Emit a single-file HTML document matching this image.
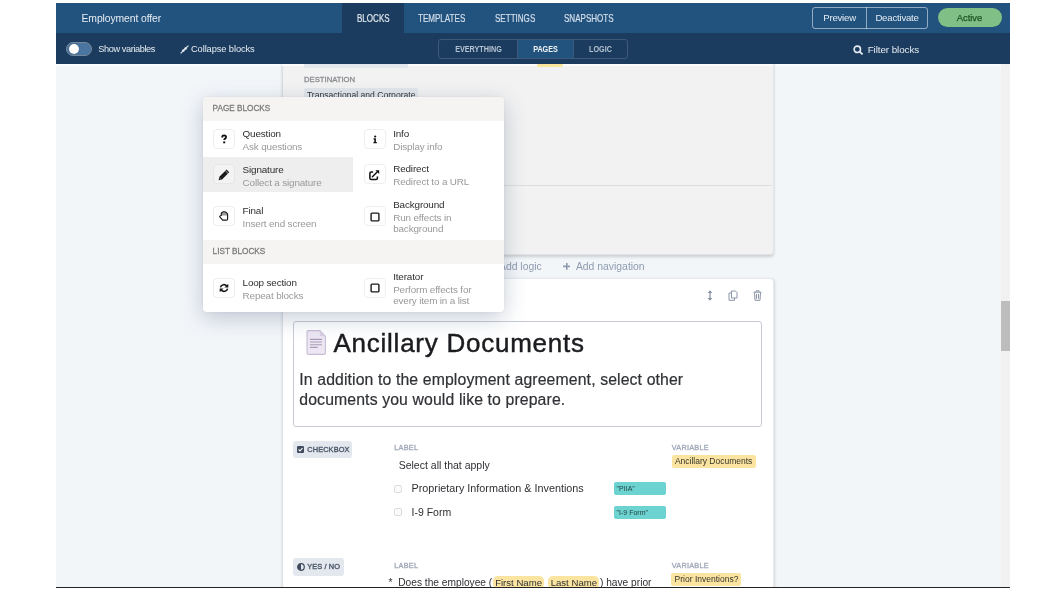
<!DOCTYPE html>
<html><head><meta charset="utf-8">
<style>
*{box-sizing:border-box;margin:0;padding:0}
html,body{width:1058px;height:596px;overflow:hidden;background:#fff;font-family:"Liberation Sans",sans-serif}
.a{position:absolute;white-space:nowrap}
#app{position:absolute;will-change:transform;left:56px;top:3px;width:954px;height:585px;background:#f3f6f9;overflow:hidden;border-bottom:1px solid #222}
#b1{position:absolute;z-index:10;left:0;top:0;width:954px;height:30px;background:#22527e}
#b2{position:absolute;z-index:10;left:0;top:30px;width:954px;height:31px;background:#1b3c5e}
.nav{color:#d5e0eb;font-size:10.2px;top:1px;line-height:30px;transform:scaleX(0.79);transform-origin:0 50%;-webkit-text-stroke:0.15px #d5e0eb}
.wt{color:#e6ecf2}
.seg{color:#b4c2d1;font-size:8.3px;font-weight:bold;line-height:19px;text-align:center;top:0;transform:scaleX(0.87)}

.lbl2{font-size:7.7px;color:#8a8c90;line-height:10px;letter-spacing:0px;-webkit-text-stroke:0.3px #8a8c90}
.lbl{font-size:7.3px;color:#a0a8b8;line-height:10px;letter-spacing:0.25px;-webkit-text-stroke:0.3px #a0a8b8}
.addl{font-size:10.4px;color:#8e9bb1;line-height:13px}
.badge{height:17.4px;background:#e3e7ee;border-radius:3px;font-size:7.4px;color:#4c5769;line-height:17.4px;letter-spacing:0.1px;-webkit-text-stroke:0.35px #4c5769}
.txt{font-size:10.5px;color:#2e3034;line-height:13px}
.ytag{height:13.3px;background:#fbe4a0;border-radius:2px;font-size:8.5px;color:#36352e;line-height:13.3px;padding-left:3.2px}
.ttag{width:52.8px;height:12.5px;background:#6dd3d0;border-radius:2px;font-size:7px;color:#1f3c3c;line-height:13.5px;padding-left:3px}
.cb{width:8px;height:8px;border:1px solid #dcdcdc;border-radius:2px;background:#fafafa}
.ntag{background:#fbe4a0;border-radius:5px;padding:1px 2.3px;margin:0 0.6px;font-size:9.6px}

.psec{background:#f5f4f2;font-size:8.2px;color:#7d7d7d;line-height:24px;padding-left:10px;letter-spacing:0px;-webkit-text-stroke:0.3px #7d7d7d}
.ib{width:22px;height:20px;border:1px solid #eeeeee;border-radius:4px;background:#fff;font-size:10px;font-weight:bold;color:#111;text-align:center;line-height:18px}
.pt{font-size:9.9px;margin-top:-0.1px;letter-spacing:-0.15px}
.ic{position:absolute;left:5.5px;top:4.5px}
.t1{line-height:13px;color:#2d2d2d}
.t2{line-height:11px;margin-top:1px;color:#999}
</style></head><body>
<div id="app">
  <div id="b1">
    <div class="a wt" style="left:25.5px;top:1px;line-height:30px;font-size:10.4px;letter-spacing:-0.1px">Employment offer</div>
    <div class="a" style="left:286px;top:0;width:62px;height:30px;background:#1b3c5e"></div>
    <div class="a nav" style="left:300.7px;color:#eef2f6">BLOCKS</div>
    <div class="a nav" style="left:362.2px">TEMPLATES</div>
    <div class="a nav" style="left:438.9px">SETTINGS</div>
    <div class="a nav" style="left:507.7px">SNAPSHOTS</div>
    <div class="a" style="left:756px;top:3.5px;width:116px;height:22.5px;border:1px solid rgba(215,226,238,0.62);border-radius:3px"></div>
    <div class="a" style="left:810px;top:4px;width:1px;height:21.5px;background:rgba(215,226,238,0.62)"></div>
    <div class="a wt" style="left:767.2px;top:4px;line-height:22.5px;font-size:9.6px;letter-spacing:-0.2px">Preview</div>
    <div class="a wt" style="left:819.4px;top:4px;line-height:22.5px;font-size:9.6px;letter-spacing:-0.2px">Deactivate</div>
    <div class="a" style="left:881.5px;top:5px;width:64px;height:19.3px;border-radius:10px;background:#80bf86;color:#1d5621;font-size:9.4px;line-height:20px;text-align:center;-webkit-text-stroke:0.25px #1d5621">Active</div>
  </div>
  <div id="b2">
    <div class="a" style="left:10.2px;top:8.6px;width:26.3px;height:14.2px;border-radius:7.1px;background:#4a75a0;border:1px solid #75879a"></div>
    <div class="a" style="left:12.5px;top:10.7px;width:10.4px;height:10.2px;border-radius:50%;background:#fff;box-shadow:0 0 1px rgba(0,0,0,0.4)"></div>
    <div class="a wt" style="left:42.3px;top:1.3px;line-height:31px;font-size:9.2px;letter-spacing:-0.4px">Show variables</div>
    <svg class="a" style="left:123.5px;top:11.5px" width="9" height="9" viewBox="0 0 9 9"><path d="M0.6 8.4 L8.4 0.6" stroke="#e6ecf2" stroke-width="1.2"/><circle cx="3.4" cy="5.6" r="1.25" fill="#e6ecf2"/><circle cx="5.6" cy="3.4" r="1.25" fill="#e6ecf2"/></svg>
    <div class="a wt" style="left:135px;top:1.3px;line-height:31px;font-size:9.3px;letter-spacing:-0.1px">Collapse blocks</div>
    <div class="a" style="left:382.3px;top:6.3px;width:189.5px;height:19.6px;border:1px solid #3d5a7a;border-radius:3px;overflow:hidden">
      <div class="a" style="left:78px;top:0;width:57px;height:19px;background:#22527e;border-left:1px solid #3d5a7a;border-right:1px solid #3d5a7a"></div>
      <div class="a seg" style="left:0;width:79px">EVERYTHING</div>
      <div class="a seg" style="left:78px;width:57px;color:#f2f5f8">PAGES</div>
      <div class="a seg" style="left:134px;width:55px">LOGIC</div>
    </div>
    <svg class="a" style="left:796.5px;top:12px" width="11" height="10" viewBox="0 0 11 10"><circle cx="4.3" cy="4.3" r="3.2" stroke="#e6ecf2" stroke-width="1.6" fill="none"/><path d="M6.6 6.6 L9.6 9.4" stroke="#e6ecf2" stroke-width="1.8"/></svg>
    <div class="a wt" style="left:811.7px;top:1.2px;line-height:31px;font-size:9.9px;letter-spacing:-0.1px">Filter blocks</div>
  </div>
  <div class="a" style="left:0;top:61px;width:954px;height:2px;background:#fbfcfd"></div>

  <!-- top card -->
  <div class="a" style="left:225.5px;top:-20px;width:492px;height:271.5px;background:#f2f2f2;border:1px solid #e3e4e7;border-left:1.5px solid #d8dce3;border-radius:4px;box-shadow:0 1.5px 3px rgba(0,0,0,0.16)">
  </div>
  <div class="a" style="left:248px;top:50px;width:104.3px;height:14.5px;background:#e3e8ee;border-radius:2px;z-index:2"></div>
  <div class="a" style="left:481px;top:50px;width:25.5px;height:13.5px;background:#f9e69c;border-radius:2px;z-index:2"></div>
  <div class="a" style="left:511px;top:50px;width:6.4px;height:13px;background:#2b3a4d"></div>
  <div class="a" style="left:226px;top:61px;width:491px;height:2px;background:#fbfcfd"></div>
  <div class="a lbl2" style="left:248px;top:72px">DESTINATION</div>
  <div class="a" style="left:248px;top:85.3px;width:114px;height:14px;background:#e2e6ec;border-radius:2px;font-size:8.6px;color:#2e3136;line-height:14px;padding-left:2.9px">Transactional and Corporate</div>
  <div class="a" style="left:227px;top:182px;width:489px;height:1px;background:#dedede"></div>
  <!-- add logic / navigation -->
  <svg class="a" style="left:429.6px;top:260.3px" width="7.6" height="6.8" viewBox="0 0 7.6 6.8"><path d="M3.8 0 V6.8 M0 3.4 H7.6" stroke="#8e9bb1" stroke-width="1.6"/></svg>
  <div class="a addl" style="left:443px;top:257.1px">Add logic</div>
  <svg class="a" style="left:506.6px;top:260.3px" width="7.6" height="6.8" viewBox="0 0 7.6 6.8"><path d="M3.8 0 V6.8 M0 3.4 H7.6" stroke="#8e9bb1" stroke-width="1.6"/></svg>
  <div class="a addl" style="left:519.9px;top:257.1px">Add navigation</div>
  <!-- lower card -->
  <div class="a" style="left:226px;top:275.4px;width:491.5px;height:340px;background:#fff;border:1px solid #e6e8ec;border-left:1.5px solid #dde0e6;border-radius:4px;box-shadow:0.5px 1px 3px rgba(0,0,0,0.12)"></div>
  <svg class="a" style="left:651px;top:286.5px" width="6" height="11" viewBox="0 0 6 11"><path d="M3 1 V10" stroke="#8a94a6" stroke-width="1.3"/><path d="M0.6 3 L3 0.3 L5.4 3 Z M0.6 8 L3 10.7 L5.4 8 Z" fill="#8a94a6"/></svg>
  <svg class="a" style="left:672px;top:286.5px" width="10" height="11" viewBox="0 0 10 11"><path d="M3.5 1 H7.5 L9 2.5 V8 H3.5 Z" stroke="#8a94a6" stroke-width="1" fill="none"/><path d="M3.5 3 H1 V10.3 H6.5 V8" stroke="#8a94a6" stroke-width="1" fill="none"/></svg>
  <svg class="a" style="left:697px;top:286.5px" width="9" height="11" viewBox="0 0 9 11"><path d="M0.5 2.2 H8.5 M3 2 V0.8 H6 V2 M1.5 2.5 L2 10.3 H7 L7.5 2.5 M3.5 4 V8.8 M5.5 4 V8.8" stroke="#8a94a6" stroke-width="1" fill="none"/></svg>
  <div class="a" style="left:237px;top:318px;width:469px;height:105.5px;border:1.5px solid #c7cad6;border-radius:3px"></div>
  <svg class="a" style="left:250px;top:327px" width="20" height="25" viewBox="0 0 20 25"><path d="M1 2 Q1 0.6 2.4 0.6 H13.8 L19.4 6.2 V23 Q19.4 24.4 18 24.4 H2.4 Q1 24.4 1 23 Z" fill="#ece7f3" stroke="#c8bcd6" stroke-width="1.1"/><path d="M13.8 0.6 L19.4 6.2 H15 Q13.8 6.2 13.8 5 Z" fill="#d9cfe4" stroke="none"/><path d="M4 9.4 H16 M4 12.05 H16 M4 14.7 H16 M4 17.35 H11.6" stroke="#a89bb8" stroke-width="1.1"/></svg>
  <div class="a" style="left:277.5px;top:325px;font-size:26px;letter-spacing:0.75px;color:#1b1c1f;line-height:30px;-webkit-text-stroke:0.45px #1b1c1f">Ancillary Documents</div>
  <div class="a" style="left:243.3px;top:367px;font-size:15.8px;letter-spacing:0.12px;color:#303236;-webkit-text-stroke:0.2px #303236;line-height:19.5px;white-space:normal;width:460px">In addition to the employment agreement, select other<br>documents you would like to prepare.</div>
  <!-- checkbox section -->
  <div class="a badge" style="left:236.9px;top:437.7px;width:59.2px"><svg width="7" height="7" viewBox="0 0 7 7" style="position:absolute;left:4px;top:5.2px"><rect x="0" y="0" width="7" height="7" rx="1.2" fill="#3f4a5c"/><path d="M1.6 3.5 L3 4.9 L5.5 2.2" stroke="#fff" stroke-width="1.1" fill="none"/></svg><span style="position:absolute;left:14.4px">CHECKBOX</span></div>
  <div class="a lbl" style="left:338.3px;top:440px">LABEL</div>
  <div class="a lbl" style="left:615.7px;top:440px">VARIABLE</div>
  <div class="a txt" style="left:342.7px;top:455.9px">Select all that apply</div>
  <div class="a ytag" style="left:615.7px;top:451.8px;width:84.1px">Ancillary Documents</div>
  <div class="a cb" style="left:338.3px;top:481.5px"></div>
  <div class="a txt" style="left:355.5px;top:479.4px;font-size:10.8px">Proprietary Information &amp; Inventions</div>
  <div class="a ttag" style="left:557.6px;top:479.3px">"PIIA"</div>
  <div class="a cb" style="left:338.3px;top:505.3px"></div>
  <div class="a txt" style="left:355.5px;top:503.2px">I-9 Form</div>
  <div class="a ttag" style="left:557.6px;top:503.3px">"I-9 Form"</div>
  <!-- yes/no section -->
  <div class="a badge" style="left:236.9px;top:555.2px;width:50.7px"><svg width="8" height="8" viewBox="0 0 8 8" style="position:absolute;left:4px;top:4.5px"><circle cx="4" cy="4" r="3.3" fill="none" stroke="#3f4a5c" stroke-width="1.2"/><path d="M4 0.7 A3.3 3.3 0 0 0 4 7.3 Z" fill="#3f4a5c"/></svg><span style="position:absolute;left:14.4px">YES / NO</span></div>
  <div class="a lbl" style="left:338.3px;top:557.6px">LABEL</div>
  <div class="a lbl" style="left:615.7px;top:557.6px">VARIABLE</div>
  <div class="a ytag" style="left:615.4px;top:569.6px;width:69.8px">Prior Inventions?</div>
  <div class="a txt" style="left:332.6px;top:572.6px;font-size:10.2px">*&nbsp; Does the employee (<span class="ntag">First Name</span> <span class="ntag">Last Name</span>) have prior</div>

  <!-- popup -->
  <div class="a" id="pop" style="left:146.6px;top:93.8px;width:301.6px;height:215.6px;background:#fff;border-radius:4px;box-shadow:0 6px 22px rgba(40,60,100,0.26),0 0 2px rgba(0,0,0,0.08);overflow:hidden;z-index:5">
    <div class="a psec" style="left:0;top:0;width:302px;height:24px">PAGE BLOCKS</div>
    <div class="a" style="left:0;top:60px;width:150.4px;height:35.5px;background:#eeeeee"></div>
    <div class="a psec" style="left:0;top:143.5px;width:302px;height:24.2px">LIST BLOCKS</div>

    <div class="a ib" style="left:10px;top:32.2px"><svg class="ic" width="10" height="10" viewBox="0 0 10 10"><path d="M3.2 3.6 Q3.2 1.4 5.1 1.4 Q7 1.4 7 3.1 Q7 4.2 5.9 4.8 Q5.2 5.2 5.2 6.1" fill="none" stroke="#111" stroke-width="1.9"/><rect x="4.2" y="7.4" width="2" height="1.9" fill="#111"/></svg></div>
    <div class="a pt" style="left:40px;top:29.8px"><div class="t1">Question</div><div class="t2">Ask questions</div></div>
    <div class="a ib" style="left:161px;top:31.9px"><svg class="ic" width="10" height="10" viewBox="0 0 10 10"><circle cx="5.2" cy="2.5" r="1.1" fill="#111"/><path d="M3.5 4.3 H5.9 V7.9 H6.8 V9.2 H3.4 V7.9 H4.3 V5.5 H3.5 Z" fill="#111"/></svg></div>
    <div class="a pt" style="left:190.6px;top:29.8px"><div class="t1">Info</div><div class="t2">Display info</div></div>

    <div class="a ib" style="left:10px;top:67.6px;background:#f3f3f3;border-color:#e6e6e6"><svg class="ic" style="left:4.8px;top:3.6px" width="12" height="12" viewBox="0 0 12 12"><path d="M8.6 0.6 L11.2 3.2 L4 10.4 L0.6 11.2 L1.4 7.8 Z" fill="#1a1a1a"/><path d="M7.4 1.8 L10 4.4" stroke="#eee" stroke-width="0.7"/><path d="M1.6 9 L2.8 10.2" stroke="#eee" stroke-width="0.6"/></svg></div>
    <div class="a pt" style="left:40px;top:66.1px"><div class="t1">Signature</div><div class="t2">Collect a signature</div></div>
    <div class="a ib" style="left:161px;top:67.6px"><svg class="ic" style="left:4.5px;top:4.8px" width="11" height="11" viewBox="0 0 11 11"><path d="M4.1 2 H2.2 Q0.9 2 0.9 3.3 V8.2 Q0.9 9.5 2.2 9.5 H7.1 Q8.4 9.5 8.4 8.2 V6.4" fill="none" stroke="#111" stroke-width="1.55"/><path d="M3.4 6.8 L8.6 1.6" stroke="#111" stroke-width="1.45" stroke-linecap="round"/><path d="M6.4 0.2 H10.2 V4 Z" fill="#111"/></svg></div>
    <div class="a pt" style="left:190.6px;top:65.5px"><div class="t1">Redirect</div><div class="t2">Redirect to a URL</div></div>

    <div class="a ib" style="left:10px;top:109.2px"><svg class="ic" width="10" height="10" viewBox="0 0 10 10"><path d="M2.4 2.2 Q3.2 1.2 4.5 0.9 Q6 0.6 7.2 1.6 Q8.5 2.4 8.5 3.6 V4.6 H2.4 Z" fill="#999"/><path d="M3.6 9.1 L0.6 5.6 Q0.8 4.6 2.3 4.5 V2.2 Q3.2 1 4.5 0.8 Q6.2 0.5 7.3 1.5 Q8.6 2.4 8.6 3.6 V7.9 Q8.6 9.1 7.4 9.1 Z" fill="none" stroke="#1a1a1a" stroke-width="1.15" stroke-linejoin="round"/></svg></div>
    <div class="a pt" style="left:40px;top:107.2px"><div class="t1">Final</div><div class="t2">Insert end screen</div></div>
    <div class="a ib" style="left:161px;top:109.7px"><svg class="ic" width="10" height="10" viewBox="0 0 10 10"><rect x="1.1" y="1.1" width="7.8" height="7.8" rx="1" fill="none" stroke="#1a1a1a" stroke-width="1.4"/></svg></div>
    <div class="a pt" style="left:190.6px;top:101.4px"><div class="t1">Background</div><div class="t2">Run effects in<br>background</div></div>

    <div class="a ib" style="left:10px;top:181.2px"><svg class="ic" width="10" height="10" viewBox="0 0 10 10"><path d="M1.4 4.4 A3.7 3.7 0 0 1 7.8 2.9" fill="none" stroke="#1a1a1a" stroke-width="1.6"/><path d="M9.3 0.8 V4.6 H5.5 Z" fill="#1a1a1a"/><path d="M8.6 5.6 A3.7 3.7 0 0 1 2.2 7.1" fill="none" stroke="#1a1a1a" stroke-width="1.6"/><path d="M0.7 9.2 V5.4 H4.5 Z" fill="#1a1a1a"/></svg></div>
    <div class="a pt" style="left:40px;top:179.4px"><div class="t1">Loop section</div><div class="t2">Repeat blocks</div></div>
    <div class="a ib" style="left:161px;top:181.2px"><svg class="ic" width="10" height="10" viewBox="0 0 10 10"><rect x="1.1" y="1.1" width="7.8" height="7.8" rx="1" fill="none" stroke="#1a1a1a" stroke-width="1.4"/></svg></div>
    <div class="a pt" style="left:190.6px;top:173.1px"><div class="t1">Iterator</div><div class="t2">Perform effects for<br>every item in a list</div></div>
  </div>
  <!-- scrollbar -->
  <div class="a" style="left:945px;top:61px;width:9px;height:524px;background:#f1f1f1"></div>
  <div class="a" style="left:945px;top:297.8px;width:9px;height:50.2px;background:#bdbdbd"></div>
</div>
</body></html>
